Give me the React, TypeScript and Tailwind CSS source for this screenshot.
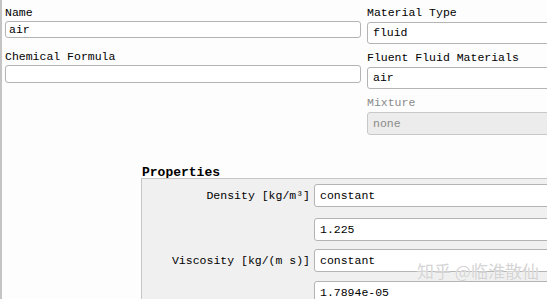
import React from 'react';

const mono = "font-['Liberation_Mono','DejaVu_Sans_Mono',monospace]";

const Field = ({ value, className = '' }: { value?: string; className?: string }) => (
  <div className={`flex items-center shrink-0 bg-white border border-[#b4b4b4] rounded-[3px] text-black ${className}`}>
    {value}
  </div>
);

const PropRow = ({ label, value, className = '' }: { label?: string; value: string; className?: string }) => (
  <div className={`flex items-center ${className}`}>
    <div className="w-[169px] shrink-0 text-right text-black pr-[1px]">{label}</div>
    <Field value={value} className="ml-[3px] w-[300px] h-[23px] px-[5px]" />
  </div>
);

export default function App() {
  return (
    <div className={`relative w-[547px] h-[299px] overflow-hidden bg-[#fdfdfd] border-l-2 border-[#c4c4c4] ${mono} text-[11.5px] leading-[14px]`}>
      <div className="flex pl-[3px] gap-[6px]">
        <div className="w-[356px] shrink-0 flex flex-col pt-[6px]">
          <div className="text-black">Name</div>
          <Field value="air" className="mt-[1px] h-[17px] px-[3px]" />
          <div className="mt-[12px] text-black">Chemical Formula</div>
          <Field className="mt-[1px] h-[18px]" />
        </div>
        <div className="w-[260px] shrink-0 flex flex-col pt-[6px]">
          <div className="text-black">Material Type</div>
          <Field value="fluid" className="mt-[2px] h-[22px] px-[5px]" />
          <div className="mt-[7px] text-black">Fluent Fluid Materials</div>
          <Field value="air" className="mt-[2px] h-[22px] px-[5px]" />
          <div className="mt-[7px] text-[#8a8a8a]">Mixture</div>
          <div className="mt-[2px] h-[23px] px-[5px] flex items-center bg-[#ececec] border border-[#c8c8c8] rounded-[3px] text-[#8a8a8a]">
            none
          </div>
        </div>
      </div>

      <div className="ml-[139px] mt-[28px] w-[600px] flex flex-col">
        <div className="text-[13px] leading-[16px] font-bold text-black pl-[1px] pt-[2px]">Properties</div>
        <div className="mt-[-3px] h-[140px] bg-[#f0f0f0] border border-[#c6c6c6] pt-[5px]">
          <PropRow label="Density [kg/m³]" value="constant" />
          <PropRow value="1.225" className="mt-[11px]" />
          <PropRow label="Viscosity [kg/(m s)]" value="constant" className="mt-[8px]" />
          <PropRow value="1.7894e-05" className="mt-[9px]" />
        </div>
      </div>

      <div className="absolute left-[415px] top-[260px] text-[17px] leading-[22px] text-[#d4d4d4] font-['Noto_Sans_CJK_SC',sans-serif] [text-shadow:0_0_1px_#ffffff]">
        知乎 @临淮散仙
      </div>
    </div>
  );
}
